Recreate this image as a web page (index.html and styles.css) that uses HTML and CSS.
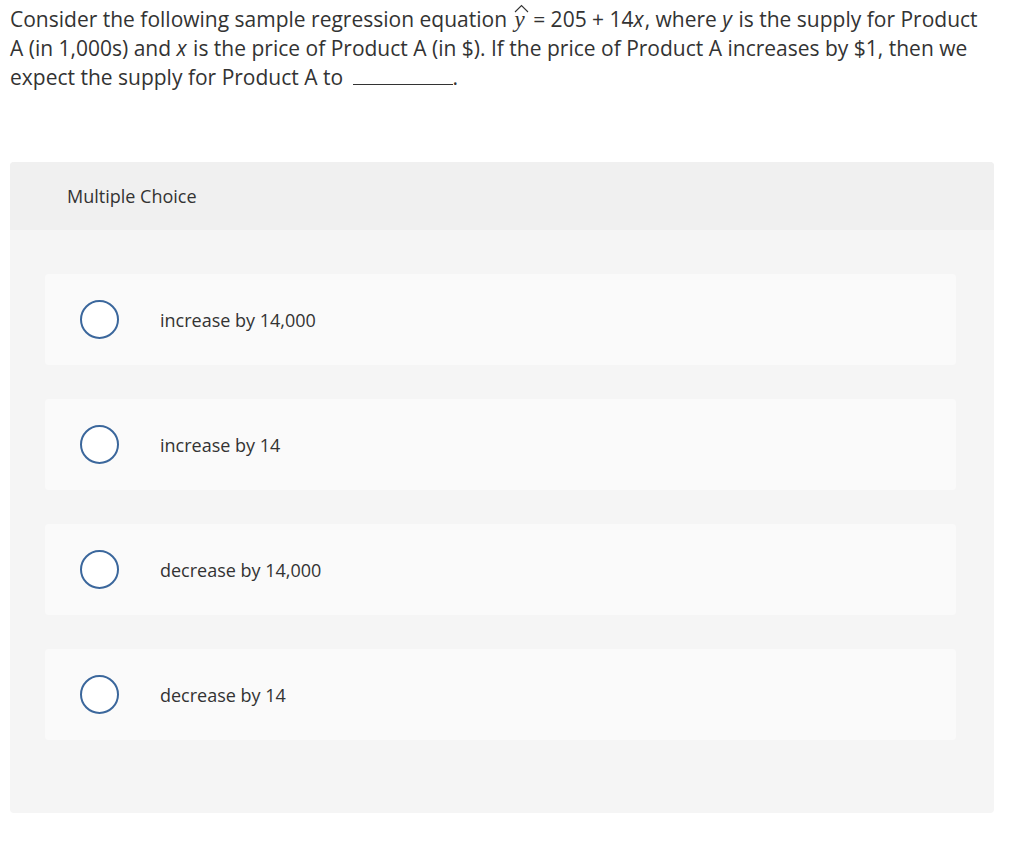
FILE: index.html
```html
<!DOCTYPE html>
<html>
<head>
<meta charset="utf-8">
<link rel="stylesheet" href="styles.css">
</head>
<body>
<div class="page">
  <p class="question">Consider the following sample regression equation <span class="yhat"><svg class="hat" width="15" height="9" viewBox="0 0 15 9"><path d="M1 8 L7.5 1.5 L14 8" fill="none" stroke="#333" stroke-width="1.1"/></svg><i class="yy">y</i></span> = 205 + 14<i>x</i>, where <i>y</i> is the supply for Product A (in 1,000s) and <i>x</i> is the price of Product A (in $). If the price of Product A increases by $1, then we expect the supply for Product A to <span class="blank"></span>.</p>

  <section class="panel">
    <div class="panel-head">Multiple Choice</div>
    <div class="options">
      <div class="option"><span class="radio"></span><span class="label">increase by 14,000</span></div>
      <div class="option"><span class="radio"></span><span class="label">increase by 14</span></div>
      <div class="option"><span class="radio"></span><span class="label">decrease by 14,000</span></div>
      <div class="option"><span class="radio"></span><span class="label">decrease by 14</span></div>
    </div>
  </section>
</div>
</body>
</html>
```
FILE: styles.css
```css
html, body {
  margin: 0;
  padding: 0;
  background: #fff;
}
body {
  font-family: "Open Sans", Lato, sans-serif;
  color: #333;
}
.page {
  padding: 5px 20px 0 10px;
}
.question {
  margin: 0;
  width: 978px;
  font-size: 21px;
  line-height: 29px;
}
.question i {
  font-style: italic;
  padding-right: 1px;
}
.yhat {
  position: relative;
  display: inline-block;
  padding: 0 2px;
}
.yy {
  font-family: "Liberation Serif", serif;
  font-size: 23px;
}
.hat {
  position: absolute;
  left: 2px;
  top: -1px;
}
.blank {
  display: inline-block;
  width: 100px;
  border-bottom: 1px solid #333;
  margin-left: 4px;
}
.panel {
  margin-top: 70px;
  width: 984px;
  background: #f5f5f5;
  border-radius: 4px;
  overflow: hidden;
}
.panel-head {
  background: #f0f0f0;
  height: 68px;
  padding-left: 57px;
  display: flex;
  align-items: center;
  font-size: 18px;
  color: #333;
}
.options {
  padding: 44px 38px 73px 35px;
  display: flex;
  flex-direction: column;
  gap: 34px;
}
.option {
  background: #fafafa;
  border-radius: 4px;
  height: 91px;
  display: flex;
  align-items: center;
  padding-left: 35px;
}
.radio {
  width: 35px;
  height: 35px;
  border: 2px solid #3b679c;
  border-radius: 50%;
  background: #fff;
  flex: none;
}
.label {
  margin-left: 41px;
  font-size: 18px;
  color: #333;
}
```
